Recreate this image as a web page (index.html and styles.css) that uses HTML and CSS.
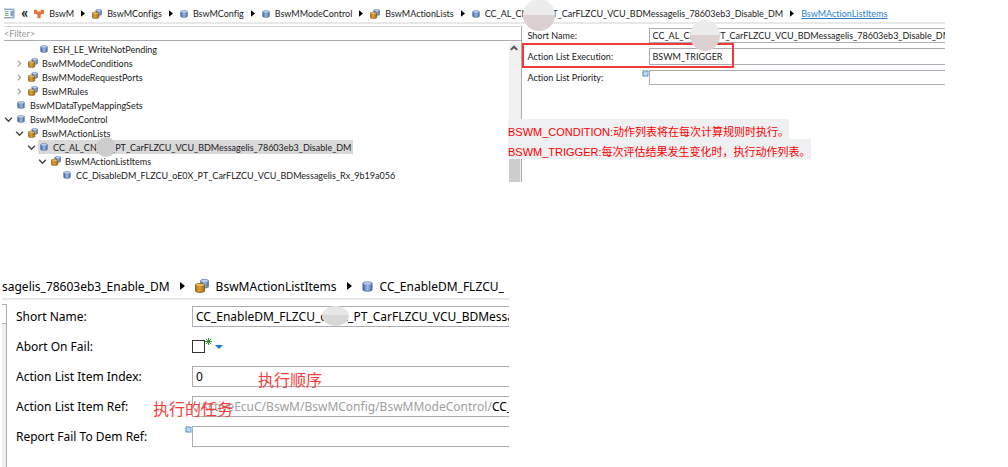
FILE: index.html
```
<!DOCTYPE html>
<html lang="zh-CN">
<head>
    <meta charset="UTF-8">
    <meta name="viewport" content="width=device-width, initial-scale=1.0">
    <title>BswM Action Lists</title>
    <link rel="stylesheet" href="styles.css">
</head>
<body>
    <!-- shared icon shapes -->
    <svg class="sprite" aria-hidden="true">
        <defs>
            <linearGradient id="gold" x1="0" x2="1" y1="0" y2="0">
                <stop offset="0" stop-color="#a8701a"/>
                <stop offset="0.4" stop-color="#dba13a"/>
                <stop offset="1" stop-color="#a06a14"/>
            </linearGradient>
            <linearGradient id="steel" x1="0" x2="1" y1="0" y2="0">
                <stop offset="0" stop-color="#3f629c"/>
                <stop offset="0.5" stop-color="#9dbbe2"/>
                <stop offset="1" stop-color="#4a6ca6"/>
            </linearGradient>
        </defs>
        <symbol id="item" viewBox="0 0 12 12">
            <path d="M1 2.5C1 .5 11 .5 11 2.5V9.5C11 11.7 1 11.7 1 9.5Z" fill="url(#steel)" stroke="#45608f" stroke-width=".8"/>
            <ellipse cx="6" cy="2.6" rx="4.6" ry="1.3" fill="#b4cbeb"/>
        </symbol>
        <symbol id="group" viewBox="0 0 14 14">
            <path d="M5.5 1.8C5.5 .2 13.5 .2 13.5 1.8V7.8C13.5 9.4 5.5 9.4 5.5 7.8Z" fill="url(#steel)" stroke="#5672a3" stroke-width=".7"/>
            <ellipse cx="9.5" cy="1.9" rx="3.6" ry=".9" fill="#c3d6f0"/>
            <path d="M.5 5.8C.5 4 9.5 4 9.5 5.8V12C9.5 13.9 .5 13.9 .5 12Z" fill="url(#gold)" stroke="#7c500d" stroke-width=".8"/>
            <ellipse cx="5" cy="5.9" rx="4" ry="1.1" fill="#e9bb62"/>
        </symbol>
        <symbol id="module" viewBox="0 0 12 10">
            <path d="M0 0H4V2H8V0H12V5H8.500V6H8V10H4V6H3.500V5H0Z" fill="#e8743b"/>
        </symbol>
        <symbol id="outline" viewBox="0 0 12 12">
            <rect x="0" y="0" width="12" height="12" fill="#cfe5f7"/>
            <path d="M0 1.500H10.500V10.500H0" fill="#fff" stroke="#7e93a8"/>
            <path d="M1 4H5M1 6H5M1 8H5" stroke="#5f9a77"/>
            <rect x="7" y="3" width="3" height="6" fill="#7ea6cf"/>
        </symbol>
        <symbol id="sep" viewBox="0 0 5 8">
            <path d="M0 0L5 4L0 8Z" fill="#000"/>
        </symbol>
        <symbol id="open" viewBox="0 0 8 8">
            <path d="M1 2.500L4 5.500L7 2.500" fill="none" stroke="#444" stroke-width="1.200"/>
        </symbol>
        <symbol id="closed" viewBox="0 0 8 8">
            <path d="M2.500 1.500L5 4L2.500 6.500" fill="none" stroke="#999"/>
        </symbol>
        <symbol id="up" viewBox="0 0 8 8">
            <path d="M1.500 5.500L4 3L6.500 5.500" fill="none" stroke="#555" stroke-width="1.600"/>
        </symbol>
        <symbol id="unset" viewBox="0 0 8 8">
            <rect x="1" y="1" width="6" height="6" fill="#b9d8f3" stroke="#2d6cab" stroke-width="1.400" stroke-dasharray="1 1"/>
        </symbol>
        <symbol id="star" viewBox="0 0 8 8">
            <path d="M4 0V8M0 4H8M1 1L7 7M7 1L1 7" stroke="#1d8a1d" stroke-width="1"/>
        </symbol>
        <symbol id="drop" viewBox="0 0 8 4">
            <path d="M0 0H8L4 4Z" fill="#0f7bd8"/>
        </symbol>
    </svg>

    <section class="editor small">
        <nav class="crumbs">
            <svg class="icon-outline"><use href="#outline"/></svg>
            <span class="back">«</span>
            <span class="crumb"><svg class="icon"><use href="#module"/></svg>BswM</span>
            <svg class="sep"><use href="#sep"/></svg>
            <span class="crumb"><svg class="icon"><use href="#group"/></svg>BswMConfigs</span>
            <svg class="sep"><use href="#sep"/></svg>
            <span class="crumb"><svg class="icon leaf"><use href="#item"/></svg>BswMConfig</span>
            <svg class="sep"><use href="#sep"/></svg>
            <span class="crumb"><svg class="icon leaf"><use href="#item"/></svg>BswMModeControl</span>
            <svg class="sep"><use href="#sep"/></svg>
            <span class="crumb"><svg class="icon"><use href="#group"/></svg>BswMActionLists</span>
            <svg class="sep"><use href="#sep"/></svg>
            <span class="crumb"><svg class="icon leaf"><use href="#item"/></svg>CC_AL_CN_oE_PT_CarFLZCU_VCU_BDMessagelis_78603eb3_Disable_DM<span class="mask mask-crumb"></span></span>
            <svg class="sep"><use href="#sep"/></svg>
            <a class="crumb" href="#items">BswMActionListItems</a>
        </nav>

        <div class="panes">
            <div class="browser">
                <input class="filter" type="text" placeholder="&lt;Filter&gt;" aria-label="Filter">
                <div class="tree-area">
                    <ul class="tree">
                        <li class="level-3"><span class="twisty"></span><svg class="icon leaf"><use href="#item"/></svg><span class="name">ESH_LE_WriteNotPending</span></li>
                        <li class="level-2"><svg class="twisty"><use href="#closed"/></svg><svg class="icon"><use href="#group"/></svg><span class="name">BswMModeConditions</span></li>
                        <li class="level-2"><svg class="twisty"><use href="#closed"/></svg><svg class="icon"><use href="#group"/></svg><span class="name">BswMModeRequestPorts</span></li>
                        <li class="level-2"><svg class="twisty"><use href="#closed"/></svg><svg class="icon"><use href="#group"/></svg><span class="name">BswMRules</span></li>
                        <li class="level-1"><span class="twisty"></span><svg class="icon leaf"><use href="#item"/></svg><span class="name">BswMDataTypeMappingSets</span></li>
                        <li class="level-1"><svg class="twisty"><use href="#open"/></svg><svg class="icon leaf"><use href="#item"/></svg><span class="name">BswMModeControl</span></li>
                        <li class="level-2"><svg class="twisty"><use href="#open"/></svg><svg class="icon"><use href="#group"/></svg><span class="name">BswMActionLists</span></li>
                        <li class="level-3"><svg class="twisty"><use href="#open"/></svg><span class="selected"><svg class="icon leaf"><use href="#item"/></svg><span class="name">CC_AL_CN_oE_PT_CarFLZCU_VCU_BDMessagelis_78603eb3_Disable_DM</span><span class="mask mask-tree"></span></span></li>
                        <li class="level-4"><svg class="twisty"><use href="#open"/></svg><svg class="icon"><use href="#group"/></svg><span class="name">BswMActionListItems</span></li>
                        <li class="level-5"><span class="twisty"></span><svg class="icon leaf"><use href="#item"/></svg><span class="name">CC_DisableDM_FLZCU_oE0X_PT_CarFLZCU_VCU_BDMessagelis_Rx_9b19a056</span></li>
                    </ul>
                    <div class="scrollbar">
                        <svg class="scroll-up"><use href="#up"/></svg>
                        <div class="thumb"></div>
                    </div>
                </div>
            </div>

            <form class="properties">
                <div class="row">
                    <label for="list-name">Short Name:</label>
                    <div class="field">
                        <input id="list-name" type="text" value="CC_AL_CN_oE_PT_CarFLZCU_VCU_BDMessagelis_78603eb3_Disable_DM">
                        <span class="mask mask-name"></span>
                    </div>
                </div>
                <div class="row">
                    <label for="execution">Action List Execution:</label>
                    <div class="field">
                        <select id="execution">
                            <option>BSWM_TRIGGER</option>
                            <option>BSWM_CONDITION</option>
                        </select>
                    </div>
                </div>
                <div class="row">
                    <label for="priority">Action List Priority:</label>
                    <div class="field">
                        <svg class="unset"><use href="#unset"/></svg>
                        <input id="priority" type="text">
                    </div>
                </div>
                <div class="highlight"></div>
            </form>
        </div>

        <div class="notes">
            <p>BSWM_CONDITION:动作列表将在每次计算规则时执行。</p>
            <p>BSWM_TRIGGER:每次评估结果发生变化时，执行动作列表。</p>
        </div>
    </section>

    <section class="editor large" id="items">
        <nav class="crumbs">
            <span class="crumb">sagelis_78603eb3_Enable_DM</span>
            <svg class="sep"><use href="#sep"/></svg>
            <span class="crumb"><svg class="icon"><use href="#group"/></svg>BswMActionListItems</span>
            <svg class="sep"><use href="#sep"/></svg>
            <span class="crumb"><svg class="icon leaf"><use href="#item"/></svg>CC_EnableDM_FLZCU_</span>
        </nav>

        <div class="panes">
            <div class="sash"></div>
            <form class="properties">
                <div class="row">
                    <label for="item-name">Short Name:</label>
                    <div class="field">
                        <input id="item-name" type="text" value="CC_EnableDM_FLZCU_oE0X_PT_CarFLZCU_VCU_BDMessagelis">
                        <span class="mask mask-item"></span>
                    </div>
                </div>
                <div class="row">
                    <label for="abort">Abort On Fail:</label>
                    <div class="field check">
                        <input id="abort" type="checkbox">
                        <svg class="star"><use href="#star"/></svg>
                        <svg class="drop"><use href="#drop"/></svg>
                    </div>
                </div>
                <div class="row">
                    <label for="index">Action List Item Index:</label>
                    <div class="field">
                        <input id="index" type="text" value="0">
                        <span class="remark remark-index">执行顺序</span>
                    </div>
                </div>
                <div class="row">
                    <label for="item-ref">Action List Item Ref:</label>
                    <div class="field ref">
                        <span class="path">/ActiveEcuC/BswM/BswMConfig/BswMModeControl/</span>
                        <input id="item-ref" type="text" value="CC_AL">
                        <span class="remark remark-ref">执行的任务</span>
                    </div>
                </div>
                <div class="row">
                    <label for="dem-ref">Report Fail To Dem Ref:</label>
                    <div class="field">
                        <svg class="unset"><use href="#unset"/></svg>
                        <input id="dem-ref" type="text">
                    </div>
                </div>
            </form>
        </div>
    </section>
</body>
</html>
```

FILE: styles.css
```
* {
    box-sizing: border-box;
}

body {
    margin: 0;
    background-color: #fff;
    color: #1a1a1a;
    font-family: Lato, "Noto Sans CJK SC", sans-serif;
    font-variant-ligatures: none;
}

svg {
    display: block;
    flex: none;
}

input,
select {
    font: inherit;
    font-variant-ligatures: none;
    color: inherit;
    margin: 0;
    border: 1px solid #abadb3;
    border-radius: 0;
    background-color: #fff;
    outline: none;
}

.sprite {
    position: absolute;
    width: 0;
    height: 0;
}

/* editors */

.editor {
    position: relative;
}

.small {
    margin: 0 63px 0 4px;
    padding-top: 5px;
    font-size: 9px;
}

.large {
    width: calc(50% + 3px);
    margin: 92px 0 0 2px;
    font-family: "Noto Sans", "Noto Sans CJK SC", sans-serif;
    font-size: 12px;
    color: #000;
}

.crumbs {
    display: flex;
    align-items: center;
    white-space: nowrap;
    border-bottom: 2px solid #e8e8e8;
}

.small .crumbs {
    height: 19px;
    gap: 7px;
}

.large .crumbs {
    height: 26px;
    gap: 10px;
    overflow: hidden;
}

.crumb {
    display: flex;
    align-items: center;
    flex: none;
    gap: 5px;
    position: relative;
}

.large .crumb {
    gap: 7px;
}

a.crumb {
    color: #2a7fd4;
    text-decoration: underline;
}

.back {
    font-size: 16px;
    font-weight: bold;
    line-height: 12px;
    margin: -4px -1px 0;
}

.icon-outline {
    width: 11px;
    height: 11px;
}

.icon {
    width: 10px;
    height: 10px;
}

.leaf {
    width: 8px;
    height: 8px;
}

.large .icon {
    width: 14px;
    height: 14px;
}

.large .leaf {
    width: 11px;
    height: 11px;
}

.sep {
    width: 4px;
    height: 7px;
}

.large .sep {
    width: 5px;
    height: 8px;
}

.panes {
    display: flex;
    margin-top: 2px;
}

/* tree */

.browser {
    flex: 0 0 55%;
    min-width: 0;
    border-top: 1px solid #d4d4d4;
    border-right: 1px solid #abadb3;
}

.filter {
    display: block;
    width: 100%;
    height: 14px;
    padding: 0;
    border-width: 0 0 1px;
}

.filter::placeholder {
    color: #999;
}

.tree-area {
    display: flex;
    justify-content: space-between;
}

.tree {
    list-style: none;
    margin: 0;
    padding: 1px 0 0;
    white-space: nowrap;
}

.tree li {
    display: flex;
    align-items: center;
    height: 14px;
    gap: 4px;
}

.tree .leaf {
    margin-right: 1px;
}

.level-2 { padding-left: 11px; }
.level-3 { padding-left: 23px; }
.level-4 { padding-left: 34px; }
.level-5 { padding-left: 46px; }

.twisty {
    width: 9px;
    height: 9px;
}

.selected {
    display: flex;
    align-items: center;
    gap: 4px;
    height: 14px;
    margin-left: -2px;
    padding: 0 2px;
    position: relative;
    background-color: #d9d9d9;
}

.scrollbar {
    display: flex;
    flex-direction: column;
    justify-content: space-between;
    width: 12px;
    margin-top: 1px;
    background-color: #f0f0f0;
}

.scroll-up {
    width: 10px;
    height: 12px;
}

.thumb {
    width: 11px;
    height: 24px;
    background-color: #cdcdcd;
}

/* properties */

.properties {
    position: relative;
    flex: 1;
    min-width: 0;
    display: flex;
    flex-direction: column;
}

.small .properties {
    gap: 5px;
    padding: 2px 0 0 6px;
}

.large .properties {
    gap: 9px;
    padding: 4px 0 20px 9px;
}

.row {
    display: flex;
    align-items: center;
}

.row label {
    flex: none;
    width: 121px;
}

.large .row label {
    width: 176px;
}

.field {
    flex: 1;
    min-width: 0;
    position: relative;
}

.field input[type="text"],
.field select {
    display: block;
    width: 100%;
    height: 15px;
    padding: 0 3px;
    border-right: 0;
    appearance: none;
}

.field input[type="text"] {
    padding-right: 0;
}

.field select {
    height: 17px;
}

.large .field,
.large .field input[type="text"] {
    height: 21px;
}

.field.check {
    display: flex;
    align-items: center;
}

.check input {
    width: 13px;
    height: 13px;
    appearance: none;
    border-color: #333;
}

.star {
    width: 7px;
    height: 7px;
    margin-bottom: 10px;
}

.drop {
    width: 8px;
    height: 4px;
    margin-left: 3px;
}

.field.ref {
    display: flex;
    align-items: center;
    border: 1px solid #abadb3;
    border-right: 0;
    padding-left: 3px;
}

.large .ref input[type="text"] {
    flex: 1;
    min-width: 0;
    height: 19px;
    border: 0;
    padding: 0;
}

.path {
    color: #a0a0a0;
}

.unset {
    position: absolute;
    left: -7px;
    top: 0;
    width: 7px;
    height: 7px;
}

.sash {
    width: 5px;
    margin-top: 2px;
    border-top: 1px solid #abadb3;
    border-right: 1px solid #abadb3;
    background: linear-gradient(#fff 18px, #abadb3 18px, #abadb3 19px, #f0f0f0 19px);
}

/* marks drawn over the editors */

.highlight {
    position: absolute;
    left: 0;
    top: 17px;
    width: 212px;
    height: 25px;
    border: 2px solid #f03a3a;
}

.notes {
    position: absolute;
    left: 504px;
    top: 119px;
    color: #f00;
    font-family: "Liberation Sans", "Noto Sans CJK SC", sans-serif;
    font-size: 11px;
    white-space: nowrap;
}

.notes p {
    width: max-content;
    height: 20px;
    margin: 0;
    line-height: 26px;
    background-color: #eff0f2;
}

.remark {
    position: absolute;
    color: #f83c3c;
    font-size: 16px;
    line-height: 20px;
    white-space: nowrap;
}

.remark-index {
    left: 66px;
    top: 4px;
}

.remark-ref {
    left: -40px;
    top: 2px;
}

.mask {
    position: absolute;
    border-radius: 50%;
    background: linear-gradient(#ececec 50%, #dcd0d0 50%);
}

.mask-crumb {
    left: 51px;
    top: -9px;
    width: 32px;
    height: 32px;
    z-index: 1;
}

.mask-tree {
    left: 58px;
    top: -3px;
    width: 20px;
    height: 20px;
    background: #cdcdcd;
}

.mask-name {
    left: 41px;
    top: -8px;
    width: 30px;
    height: 31px;
    z-index: 1;
}

.mask-item {
    left: 130px;
    top: 0;
    width: 27px;
    height: 20px;
    background: linear-gradient(#e6e6e6 45%, #d8d8d8 45%);
}
```
